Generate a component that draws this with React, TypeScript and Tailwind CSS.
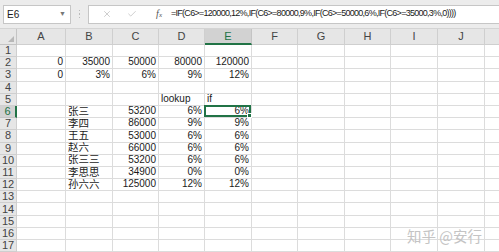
import * as React from "react"
import { X, Check } from "lucide-react"

const cols = ["A", "B", "C", "D", "E", "F", "G", "H", "I", "J", ""]

type Cell = { v: string; left?: boolean; cjk?: boolean }
const data: Record<number, Record<string, Cell>> = {
  2: { A: { v: "0" }, B: { v: "35000" }, C: { v: "50000" }, D: { v: "80000" }, E: { v: "120000" } },
  3: { A: { v: "0" }, B: { v: "3%" }, C: { v: "6%" }, D: { v: "9%" }, E: { v: "12%" } },
  5: { D: { v: "lookup", left: true }, E: { v: "if", left: true } },
  6: { B: { v: "张三", left: true, cjk: true }, C: { v: "53200" }, D: { v: "6%" }, E: { v: "6%" } },
  7: { B: { v: "李四", left: true, cjk: true }, C: { v: "86000" }, D: { v: "9%" }, E: { v: "9%" } },
  8: { B: { v: "王五", left: true, cjk: true }, C: { v: "53000" }, D: { v: "6%" }, E: { v: "6%" } },
  9: { B: { v: "赵六", left: true, cjk: true }, C: { v: "66000" }, D: { v: "6%" }, E: { v: "6%" } },
  10: { B: { v: "张三三", left: true, cjk: true }, C: { v: "53200" }, D: { v: "6%" }, E: { v: "6%" } },
  11: { B: { v: "李思思", left: true, cjk: true }, C: { v: "34900" }, D: { v: "0%" }, E: { v: "0%" } },
  12: { B: { v: "孙六六", left: true, cjk: true }, C: { v: "125000" }, D: { v: "12%" }, E: { v: "12%" } },
}

const rows = Array.from({ length: 17 }, (_, i) => i + 1)

export default function App() {
  return (
    <div className="w-[499px] h-[252px] overflow-hidden bg-white relative text-[#1a1a1a] font-['Liberation_Sans','Noto_Sans_CJK_SC',sans-serif]">
      {/* formula bar */}
      <div className="h-[29px] bg-[#ececec] border-b border-[#d4d4d4] flex items-center pl-[3px]">
        <div className="w-[68px] h-[19px] bg-white border border-[#c6c6c6] flex items-center justify-between pl-[3px] pr-[4px] text-[10px]">
          <span>E6</span>
          <span className="text-[7px] text-[#777]">▼</span>
        </div>
        <div className="w-[17px] flex flex-col items-center gap-[2px]">
          <span className="size-[1.5px] bg-[#bbb]" />
          <span className="size-[1.5px] bg-[#bbb]" />
          <span className="size-[1.5px] bg-[#bbb]" />
        </div>
        <div className="flex-1 h-[19px] bg-white border border-[#c6c6c6] border-r-0 flex items-center">
          <div className="w-[82px] shrink-0 flex items-center text-[#b0b0b0]">
            <span className="w-[26px] flex justify-end pr-[3px]"><X size={10} strokeWidth={1.5} /></span>
            <span className="w-[23px] flex justify-end pr-[1px]"><Check size={10} strokeWidth={1.5} /></span>
            <span className="w-[24px] flex justify-end items-baseline text-[#555] italic text-[10px] leading-none font-['Liberation_Serif',serif]">
              f<span className="text-[7px]">x</span>
            </span>
          </div>
          <span className="text-[9px] tracking-[-0.72px] whitespace-nowrap">=IF(C6&gt;=120000,12%,IF(C6&gt;=80000,9%,IF(C6&gt;=50000,6%,IF(C6&gt;=35000,3%,0))))</span>
        </div>
      </div>

      {/* sheet */}
      <div className="flex">
        <div className="w-[2px] bg-[#9cc3a6]" />
        <div className="grid grid-cols-[17px_49px_47px_46px_46px_47px_46px_47px_46px_47px_47px_20px] grid-rows-[16px_repeat(17,12.2px)] text-[10px] leading-none">
          {/* header row */}
          <div className="bg-[#e6e6e6] border-r border-b border-[#c4c4c4] flex items-end justify-end p-[2px]">
            <svg width="6" height="6" viewBox="0 0 6 6"><path d="M6 0 L6 6 L0 6 Z" fill="#b8b8b8" /></svg>
          </div>
          {cols.map((c, i) => (
            <div
              key={i}
              className={
                c === "E"
                  ? "bg-[#d2d2d2] border-r border-[#c4c4c4] border-b-2 border-b-[#217346] flex items-center justify-center text-[#217346] text-[11px]"
                  : "bg-[#e6e6e6] border-r border-b border-[#cfcfcf] flex items-center justify-center text-[#444] text-[11px]"
              }
            >
              {c}
            </div>
          ))}
          {rows.map((r) => (
            <React.Fragment key={r}>
              <div
                className={
                  r === 6
                    ? "bg-[#d2d2d2] border-r-2 border-r-[#217346] border-b border-[#c4c4c4] flex items-center justify-center text-[#217346] text-[11px]"
                    : "bg-[#e6e6e6] border-r border-b border-[#cfcfcf] flex items-center justify-center text-[#444] text-[11px]"
                }
              >
                {r}
              </div>
              {cols.map((c, i) => {
                const cell = data[r]?.[c]
                const sel = r === 6 && c === "E"
                return (
                  <div
                    key={i}
                    className={
                      "relative border-r border-b border-[#dcdcdc] flex items-end pb-[1px] px-[2px] whitespace-nowrap " +
                      (cell?.left ? "justify-start" : "justify-end") +
                      (cell?.cjk ? " text-[10.5px]" : "")
                    }
                  >
                    {cell?.v}
                    {sel && (
                      <div className="absolute -left-[1px] -top-[1px] right-0 bottom-0 border-2 border-[#217346] pointer-events-none">
                        <span className="absolute -right-[3px] -bottom-[3px] size-[5px] bg-[#217346] border border-white" />
                      </div>
                    )}
                  </div>
                )
              })}
            </React.Fragment>
          ))}
        </div>
      </div>

      {/* watermark */}
      <div className="absolute left-[407px] top-[225px] text-[14.5px] text-[#c4c4c4] whitespace-nowrap font-['Noto_Sans_CJK_SC',sans-serif]">
        知乎 @安行
      </div>
    </div>
  )
}
